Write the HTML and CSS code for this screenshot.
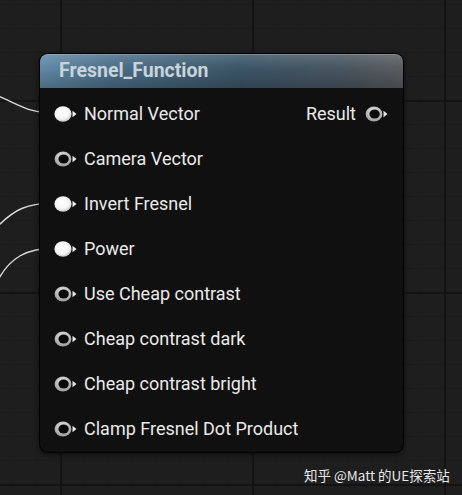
FILE: index.html
```html
<!DOCTYPE html>
<html>
<head>
<meta charset="utf-8">
<link rel="stylesheet" href="styles.css">
</head>
<body>
<div class="canvas">
  <svg class="wires" width="462" height="495" viewBox="0 0 462 495">
    <path d="M -2 96 C 22 106, 28 113, 56 113" />
    <path d="M -2 226 C 14 210, 26 203, 56 203" />
    <path d="M -2 280 C 10 258, 26 248, 56 248" />
  </svg>
  <div class="node">
    <div class="node-header">Fresnel_Function</div>
    <div class="node-body">
      <div class="row">
        <div class="pin-in"><svg class="pin" viewBox="0 0 26 18"><use href="#pin-full"/></svg><span>Normal Vector</span></div>
        <div class="pin-out"><span>Result</span><svg class="pin" viewBox="0 0 26 18"><use href="#pin-empty"/></svg></div>
      </div>
      <div class="row"><div class="pin-in"><svg class="pin" viewBox="0 0 26 18"><use href="#pin-empty"/></svg><span>Camera Vector</span></div></div>
      <div class="row"><div class="pin-in"><svg class="pin" viewBox="0 0 26 18"><use href="#pin-full"/></svg><span>Invert Fresnel</span></div></div>
      <div class="row"><div class="pin-in"><svg class="pin" viewBox="0 0 26 18"><use href="#pin-full"/></svg><span>Power</span></div></div>
      <div class="row"><div class="pin-in"><svg class="pin" viewBox="0 0 26 18"><use href="#pin-empty"/></svg><span>Use Cheap contrast</span></div></div>
      <div class="row"><div class="pin-in"><svg class="pin" viewBox="0 0 26 18"><use href="#pin-empty"/></svg><span>Cheap contrast dark</span></div></div>
      <div class="row"><div class="pin-in"><svg class="pin" viewBox="0 0 26 18"><use href="#pin-empty"/></svg><span>Cheap contrast bright</span></div></div>
      <div class="row"><div class="pin-in"><svg class="pin" viewBox="0 0 26 18"><use href="#pin-empty"/></svg><span>Clamp Fresnel Dot Product</span></div></div>
    </div>
  </div>
  <div class="watermark">知乎 @Matt 的UE探索站</div>
</div>
<svg width="0" height="0" class="defs">
  <defs>
    <radialGradient id="fullg" cx="0.45" cy="0.4" r="0.6">
      <stop offset="0" stop-color="#ffffff"/>
      <stop offset="0.7" stop-color="#f4f4f4"/>
      <stop offset="1" stop-color="#c4c4c4"/>
    </radialGradient>
    <radialGradient id="ringg" cx="0.5" cy="0.35" r="0.65">
      <stop offset="0" stop-color="#f0f0f0"/>
      <stop offset="1" stop-color="#9a9a9a"/>
    </radialGradient>
    <g id="pin-full">
      <ellipse cx="10" cy="9" rx="8.6" ry="7.8" fill="url(#fullg)"/>
      <path d="M19.5 5.8 L23.5 9 L19.5 12.2 Z" fill="#f0f0f0"/>
    </g>
    <g id="pin-empty">
      <ellipse cx="10" cy="9" rx="8.4" ry="7.4" fill="url(#ringg)"/>
      <ellipse cx="10.6" cy="9" rx="5.2" ry="4.6" fill="#0a0a0a"/>
      <path d="M19.5 5.8 L23.5 9 L19.5 12.2 Z" fill="#e6e6e6"/>
    </g>
  </defs>
</svg>
</body>
</html>
```

FILE: styles.css
```css
html, body {
  margin: 0;
  padding: 0;
}
body {
  width: 462px;
  height: 495px;
  overflow: hidden;
  background-color: #1e1e1e;
  background-image:
    linear-gradient(to right, #131313 0 2px, transparent 2px),
    linear-gradient(to bottom, #131313 0 2px, transparent 2px),
    linear-gradient(to right, #1b1b1b 0 1px, transparent 1px),
    linear-gradient(to bottom, #1b1b1b 0 1px, transparent 1px);
  background-size: 192px 192px, 192px 192px, 24px 24px, 24px 24px;
  background-position: 60px 0, 0 100px, 12px 0, 0 4px;
  font-family: Roboto, "Noto Sans", sans-serif;
}
.canvas {
  position: relative;
  width: 462px;
  height: 495px;
  padding: 54px 0 0 40px;
  box-sizing: border-box;
}
.wires {
  position: absolute;
  left: 0;
  top: 0;
  fill: none;
  stroke: #d8d8d8;
  stroke-width: 1.4;
}
.defs {
  position: absolute;
}
.node {
  position: relative;
  width: 363px;
  height: 398px;
  background: #101010;
  border-radius: 8px;
  box-shadow: 0 0 0 1px #000, 0 2px 6px rgba(0, 0, 0, 0.7);
  box-sizing: border-box;
}
.node-header {
  height: 34px;
  border-radius: 8px 8px 0 0;
  background:
    linear-gradient(to bottom, rgba(255, 255, 255, 0.14), rgba(255, 255, 255, 0) 40%, rgba(0, 0, 0, 0.22)),
    linear-gradient(to right, #628aa7 0%, #4c6f88 20%, #3c5668 55%, #4a5660 85%, #5a5d60 100%);
  color: #c9d3db;
  font-weight: bold;
  font-size: 19.5px;
  line-height: 34px;
  padding-left: 19px;
  box-shadow: inset 0 1px 0 rgba(255, 255, 255, 0.18);
}
.node-body {
  padding-top: 3px;
  display: flex;
  flex-direction: column;
}
.row {
  height: 45px;
  display: flex;
  align-items: center;
  justify-content: space-between;
  color: #eaeaea;
  font-size: 18px;
}
.pin-in {
  display: flex;
  align-items: center;
  gap: 5px;
  padding-left: 13px;
}
.pin-out {
  display: flex;
  align-items: center;
  gap: 8px;
  padding-right: 13px;
}
.pin {
  width: 26px;
  height: 18px;
  display: block;
}
.watermark {
  position: absolute;
  left: 304px;
  top: 465px;
  color: #e8e8e8;
  font-family: "Noto Sans CJK SC", "Noto Sans", sans-serif;
  font-size: 13.5px;
  line-height: 20px;
  white-space: nowrap;
}
```
